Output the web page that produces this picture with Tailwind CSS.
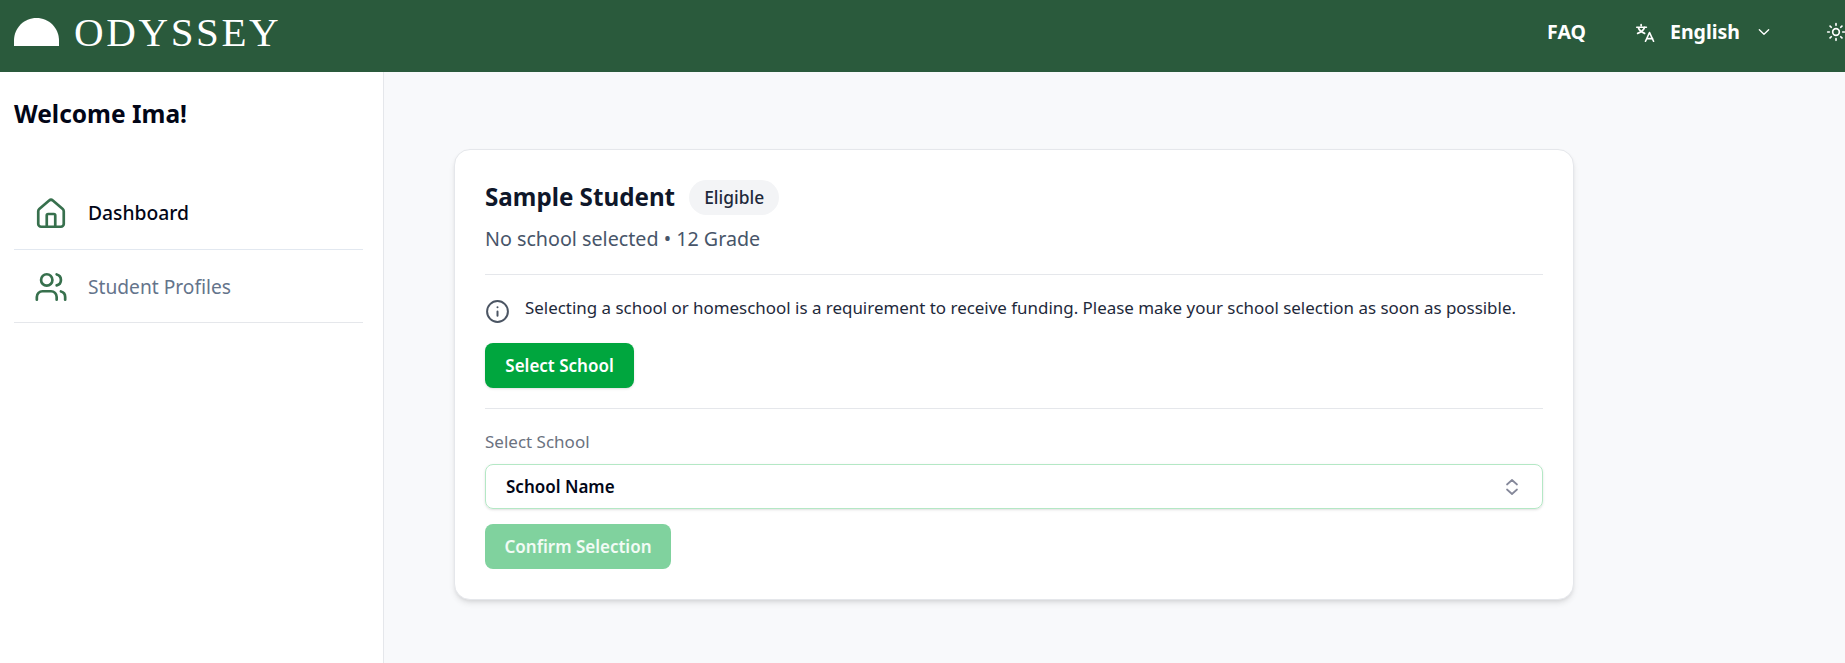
<!DOCTYPE html>
<html>
<head>
<meta charset="utf-8">
<script src="https://cdn.jsdelivr.net/npm/@tailwindcss/browser@4"></script>
</head>
<body class="font-['Noto_Sans',sans-serif] bg-[#f8f9fb] overflow-hidden">
<div class="w-[1845px] h-[663px] flex flex-col overflow-hidden">
  <header class="h-[72px] shrink-0 bg-[#2a5a3c] flex items-center justify-between pl-[14px] text-white">
    <div class="flex items-center gap-[15px] h-[28px] mt-[-8px]">
      <svg width="45" height="28" viewBox="0 0 45 28"><path d="M0 28V22.500C0 10 10 0 22.500 0S45 10 45 22.500V28Z" fill="#fff"/></svg>
      <span class="font-['Liberation_Serif',serif] text-[41px] leading-[28px] tracking-[2.6px]">ODYSSEY</span>
    </div>
    <div class="flex items-center mt-[-8px] text-[19.500px] font-bold">
      <span>FAQ</span>
      <svg class="ml-[49px]" width="21" height="21" viewBox="0 0 24 24" fill="none" stroke="#fff" stroke-width="1.9" stroke-linecap="round" stroke-linejoin="round"><path d="m12 22 4.600-10 4.600 10"/><path d="M14 19h6"/><path d="M2 6h11"/><path d="M7 3v1.500"/><path d="M11 6c-1 3-3.500 5.500-8 7"/><path d="M4 7c1 2.500 3.500 4.500 7 6"/></svg>
      <span class="ml-[14px]">English</span>
      <svg class="ml-[16px]" width="16" height="16" viewBox="0 0 24 24" fill="none" stroke="#fff" stroke-width="2" stroke-linecap="round" stroke-linejoin="round"><path d="m5 8.500 7 7 7-7"/></svg>
      <svg class="ml-[54px] mr-[-1px]" width="20" height="20" viewBox="0 0 24 24" fill="none" stroke="#fff" stroke-width="2" stroke-linecap="round"><circle cx="12" cy="12" r="4"/><path d="M12 2v2M12 20v2M4.900 4.900l1.400 1.400M17.700 17.700l1.400 1.400M2 12h2M20 12h2M6.300 17.700l-1.400 1.400M19.100 4.900l-1.400 1.400"/></svg>
    </div>
  </header>
  <div class="flex flex-1 min-h-0">
    <aside class="w-[384px] shrink-0 bg-white border-r border-[#e5e7eb] pl-[14px] pr-[20px]">
      <h2 class="text-[24.500px] leading-[30px] font-bold text-[#020617] mt-[27px] mb-[49px]">Welcome Ima!</h2>
      <nav>
        <div class="h-[72px] border-b border-[#e2e8f0] flex items-center pl-[20px] gap-[20px] text-[19.300px] text-[#020617] font-medium">
          <svg width="34" height="34" viewBox="0 0 24 24" fill="none" stroke="#37704d" stroke-width="1.9" stroke-linecap="round" stroke-linejoin="round"><path d="M15 21v-8a1 1 0 0 0-1-1h-4a1 1 0 0 0-1 1v8"/><path d="M3 10a2 2 0 0 1 .7-1.500l7-6a2 2 0 0 1 2.600 0l7 6A2 2 0 0 1 21 10v9a2 2 0 0 1-2 2H5a2 2 0 0 1-2-2z"/></svg>
          <span>Dashboard</span>
        </div>
        <div class="h-[73px] pt-[2px] border-b border-[#e5e7eb] flex items-center pl-[20px] gap-[20px] text-[19.200px] text-[#64748b]">
          <svg width="34" height="34" viewBox="0 0 24 24" fill="none" stroke="#37704d" stroke-width="1.9" stroke-linecap="round" stroke-linejoin="round"><path d="M16 21v-2a4 4 0 0 0-4-4H6a4 4 0 0 0-4 4v2"/><circle cx="9" cy="7" r="4"/><path d="M22 21v-2a4 4 0 0 0-3-3.870"/><path d="M16 3.130a4 4 0 0 1 0 7.750"/></svg>
          <span>Student Profiles</span>
        </div>
      </nav>
    </aside>
    <main class="flex-1 pl-[70px] pt-[77px]">
      <section class="w-[1120px] h-[451px] bg-white rounded-[16px] border border-[#e5e7eb] shadow-md px-[30px] pt-[30px]">
        <div class="flex items-center gap-[14px] h-[35px]">
          <span class="text-[24.200px] font-bold text-[#0f172a]">Sample Student</span>
          <span class="h-[35px] px-[15px] rounded-full bg-[#f3f4f6] text-[17.400px] font-medium text-[#1e293b] flex items-center">Eligible</span>
        </div>
        <p class="text-[19.700px] leading-[28px] text-[#475569] mt-[10px]">No school selected • 12 Grade</p>
        <div class="border-t border-[#e5e7eb] mt-[21px]"></div>
        <div class="flex gap-[15px] mt-[19px] h-[28px]">
          <svg class="mt-[5px] shrink-0" width="25" height="25" viewBox="0 0 24 24" fill="none" stroke="#4b5563" stroke-width="1.9" stroke-linecap="round"><circle cx="12" cy="12" r="10"/><path d="M12 16v-4M12 8h.01"/></svg>
          <p class="text-[16.930px] leading-[28px] text-[#1e293b] whitespace-nowrap">Selecting a school or homeschool is a requirement to receive funding. Please make your school selection as soon as possible.</p>
        </div>
        <button class="block mt-[21px] w-[149px] h-[45px] rounded-[8px] bg-[#00a63e] text-white text-[17px] font-semibold shadow-sm">Select School</button>
        <div class="border-t border-[#e5e7eb] mt-[20px]"></div>
        <label class="block text-[17px] leading-[24px] text-[#6b7280] mt-[21px]">Select School</label>
        <div class="mt-[10px] h-[45px] rounded-[8px] border border-[#b4e8c5] shadow-sm flex items-center justify-between pl-[20px] pr-[23px] text-[17px] font-semibold text-[#020617]">
          <span>School Name</span>
          <svg width="14" height="18" viewBox="0 0 14 18" fill="none" stroke="#85889a" stroke-width="1.700" stroke-linecap="round" stroke-linejoin="round"><path d="m2 6.500 5-4.500 5 4.500"/><path d="m2 11.500 5 4.500 5-4.500"/></svg>
        </div>
        <button class="block mt-[15px] w-[186px] h-[45px] rounded-[8px] bg-[#80d29e] text-white/90 text-[17px] font-semibold">Confirm Selection</button>
      </section>
    </main>
  </div>
</div>
</body>
</html>
